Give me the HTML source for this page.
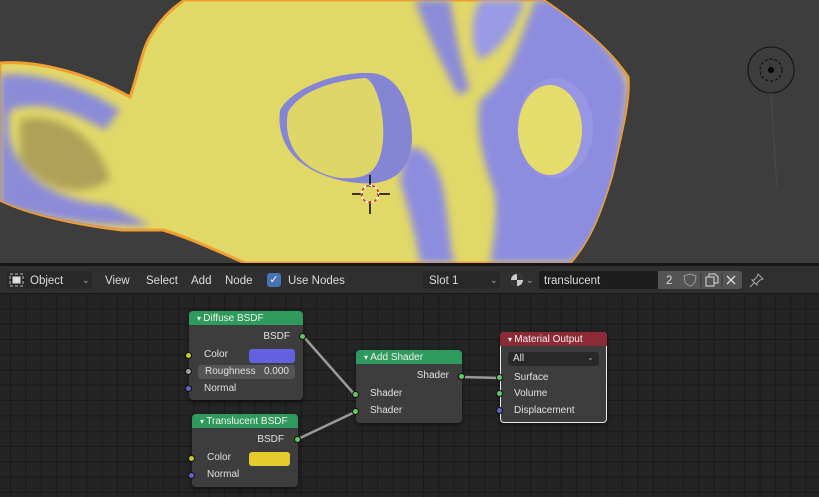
<!DOCTYPE html>
<html><head><meta charset="utf-8"><style>
*{margin:0;padding:0;box-sizing:border-box}
body{width:819px;height:497px;overflow:hidden;background:#232323;font-family:"Liberation Sans","DejaVu Sans",sans-serif;font-size:11px;color:#dcdcdc;position:relative}
.abs{position:absolute}
#vp{left:0;top:0;width:819px;height:263px;background:#3d3d3d;overflow:hidden}
#sep{left:0;top:263px;width:819px;height:3px;background:#161616}
#hdr{left:0;top:266px;width:819px;height:27px;background:#2f2f2f}
#ed{left:0;top:293px;width:819px;height:204px;background-color:#242424;
background-image:linear-gradient(#191919 1px,transparent 1px),linear-gradient(90deg,#191919 1px,transparent 1px);
background-size:15.3px 15.3px;background-position:10px 0px}
.t{position:absolute;white-space:nowrap;line-height:14px;font-size:11.5px}
.dd{position:absolute;background:#282828;border-radius:3px}
.node{position:absolute;background:#3d3d3d;border-radius:4px;box-shadow:0 2px 4px rgba(0,0,0,.5)}
.nh{position:absolute;left:0;top:0;right:0;height:14px;border-radius:4px 4px 0 0;font-size:10px;line-height:15px;padding-left:8px;color:#f0f0f0}
.nh:before{content:"▾ ";font-size:8px}
.nt{position:absolute;font-size:10px;line-height:14px;color:#e0e0e0;white-space:nowrap}
.s{position:absolute;width:7px;height:7px;border-radius:50%;border:1px solid #111}
.g{background:#63c763}.y{background:#c7c729}.p{background:#6363c7}.gr{background:#a1a1a1}
</style></head><body>
<div id="vp" class="abs">
<svg width="819" height="263" viewBox="0 0 819 263">
<defs><filter id="b"><feGaussianBlur stdDeviation="4"/></filter>
<clipPath id="c"><path d="M185,0 L543,0 C580,25 610,50 628,77 C630,100 622,130 612,175 C600,215 590,240 570,263 L245,263 C215,250 190,238 163,230 L122,230 C80,225 30,215 0,200 L0,63 C40,60 90,75 130,97 C138,75 142,50 150,37 C160,20 172,8 185,0 Z"/></clipPath></defs>
<path d="M185,0 L543,0 C580,25 610,50 628,77 C630,100 622,130 612,175 C600,215 590,240 570,263 L245,263 C215,250 190,238 163,230 L122,230 C80,225 30,215 0,200 L0,63 C40,60 90,75 130,97 C138,75 142,50 150,37 C160,20 172,8 185,0 Z" fill="#e2d868" stroke="#f0a030" stroke-width="3"/>
<g clip-path="url(#c)">
<g filter="url(#b)">
<path d="M0,75 C40,70 90,90 120,110 L105,130 C70,110 40,100 10,110 C0,160 40,200 110,205 L150,225 C90,228 30,215 0,205 Z" fill="#8b8bd8"/>
<path d="M20,120 C60,110 100,140 110,180 C80,200 40,190 20,160 Z" fill="#9a8a50" opacity=".7"/>
<path d="M415,0 L450,0 C455,30 460,60 470,90 L458,95 C440,60 425,30 415,0 Z" fill="#8b8bd8"/>
<path d="M535,0 L560,0 C590,30 625,60 628,90 L615,200 C600,240 585,255 570,263 L490,263 C495,230 500,200 490,180 C480,150 475,120 480,100 C495,90 510,70 520,40 Z" fill="#8d8de0"/>
<path d="M405,150 C420,140 440,160 445,200 C450,230 450,250 455,263 L420,263 C415,230 405,200 400,180 Z" fill="#8d8de0"/>
<path d="M480,0 L525,0 C515,30 500,50 480,60 C470,45 470,20 480,0 Z" fill="#9a9ae6"/>
</g>
<ellipse cx="555" cy="128" rx="38" ry="50" fill="#9696e2"/>
<ellipse cx="550" cy="130" rx="32" ry="45" fill="#e6dc6c"/>
<path d="M280,110 C295,85 340,72 368,73 C395,72 412,100 412,140 C410,175 388,188 350,182 C305,175 275,150 280,110 Z" fill="#8585d6"/>
<path d="M288,112 C302,88 340,80 365,78 C375,80 385,110 383,140 C380,170 370,180 340,178 C302,172 282,145 288,112 Z" fill="#e0d668"/>
</g>
<g stroke="#000" stroke-width="1.5"><line x1="370" y1="175" x2="370" y2="187"/><line x1="370" y1="201" x2="370" y2="214"/><line x1="352" y1="194" x2="363" y2="194"/><line x1="377" y1="194" x2="390" y2="194"/></g>
<circle cx="370" cy="194" r="8.5" fill="none" stroke="#fff" stroke-width="1.5"/>
<circle cx="370" cy="194" r="8.5" fill="none" stroke="#d03010" stroke-width="1.5" stroke-dasharray="3 3"/>
<circle cx="771" cy="70" r="23" fill="none" stroke="#111" stroke-width="1"/>
<circle cx="771" cy="70" r="11" fill="none" stroke="#111" stroke-width="1.2" stroke-dasharray="3 2"/>
<circle cx="771" cy="70" r="3" fill="#000"/>
<line x1="771" y1="93" x2="777" y2="190" stroke="#4a4a4a" stroke-width="1"/>
</svg>
</div>
<div id="sep" class="abs"></div>
<div id="hdr" class="abs">
<div class="dd" style="left:7px;top:5px;width:85px;height:18px"></div>
<svg class="abs" style="left:9px;top:7px" width="15" height="14"><rect x="1" y="1" width="13" height="12" fill="none" stroke="#bbb" stroke-dasharray="3 2"/><rect x="3.5" y="3.5" width="8" height="7" fill="#ddd"/></svg>
<div class="t" style="left:30px;top:8px">Object</div>
<div class="t" style="left:82px;top:7px;font-size:9px;color:#aaa">⌄</div>
<div class="t" style="left:105px;top:8px">View</div>
<div class="t" style="left:146px;top:8px">Select</div>
<div class="t" style="left:191px;top:8px">Add</div>
<div class="t" style="left:225px;top:8px">Node</div>
<div class="abs" style="left:267px;top:7px;width:14px;height:14px;background:#4772b3;border-radius:3px;color:#fff;font-size:11px;line-height:14px;text-align:center">✓</div>
<div class="t" style="left:288px;top:8px">Use Nodes</div>
<div class="dd" style="left:423px;top:5px;width:77px;height:18px"></div>
<div class="t" style="left:429px;top:8px">Slot 1</div>
<div class="t" style="left:490px;top:7px;font-size:9px;color:#aaa">⌄</div>
<svg class="abs" style="left:510px;top:7px" width="16" height="14"><circle cx="7" cy="7" r="6" fill="#ccc"/><path d="M7,7 L7,1 A6,6 0 0 1 13,7 Z M7,7 L1,7 A6,6 0 0 0 7,13 Z" fill="#333"/></svg>
<div class="t" style="left:526px;top:7px;font-size:9px;color:#aaa">⌄</div>
<div class="abs" style="left:539px;top:5px;width:119px;height:18px;background:#1d1d1d;border-radius:3px 0 0 3px"></div>
<div class="t" style="left:544px;top:8px">translucent</div>
<div class="abs" style="left:658px;top:5px;width:84px;height:18px;background:#545454;border-radius:0 3px 3px 0"></div>
<div class="t" style="left:666px;top:8px">2</div>
<svg class="abs" style="left:682px;top:7px" width="60" height="14"><path d="M8,1 L14,3 L13,9 Q10,13 8,13 Q5,12 3,9 L2,3 Z" fill="none" stroke="#999"/><line x1="19" y1="0" x2="19" y2="14" stroke="#333"/><rect x="24" y="4" width="8" height="9" fill="none" stroke="#ddd"/><path d="M27,4 L27,1 L33,1 L36,4 L36,10 L32,10" fill="none" stroke="#ddd"/><line x1="40" y1="0" x2="40" y2="14" stroke="#333"/><path d="M45,3 L53,11 M53,3 L45,11" stroke="#ddd" stroke-width="1.3"/></svg>
<svg class="abs" style="left:749px;top:6px" width="16" height="16"><path d="M9,2 L14,7 L11,8 L8,11 L8,13 L3,8 L5,8 L8,5 Z M5,11 L1,15" fill="none" stroke="#aaa"/></svg>
</div>
<div id="ed" class="abs"></div>
<svg class="abs" style="left:0;top:0" width="819" height="497">
<g stroke="#9a9a9a" stroke-width="2.5" fill="none">
<path d="M303,336 L355,395"/>
<path d="M298,439 L355,412"/>
<path d="M462,377 L500,378"/>
</g></svg>
<div class="node" style="left:189px;top:311px;width:114px;height:89px">
<div class="nh" style="background:#2e9a5c">Diffuse BSDF</div>
<div class="nt" style="right:13px;top:19px">BSDF</div>
<div class="nt" style="left:15px;top:37px">Color</div>
<div class="abs" style="left:60px;top:38px;width:46px;height:14px;background:#6262e0;border-radius:3px"></div>
<div class="abs" style="left:9px;top:54px;width:97px;height:14px;background:#545454;border-radius:3px"></div>
<div class="nt" style="left:16px;top:54px">Roughness</div>
<div class="nt" style="right:14px;top:54px">0.000</div>
<div class="nt" style="left:15px;top:71px">Normal</div>
<div class="s g" style="left:110px;top:22px"></div>
<div class="s y" style="left:-4px;top:41px"></div>
<div class="s gr" style="left:-4px;top:57px"></div>
<div class="s p" style="left:-4px;top:74px"></div>
</div>
<div class="node" style="left:192px;top:414px;width:106px;height:73px">
<div class="nh" style="background:#2e9a5c">Translucent BSDF</div>
<div class="nt" style="right:14px;top:19px">BSDF</div>
<div class="nt" style="left:15px;top:37px">Color</div>
<div class="abs" style="left:57px;top:38px;width:41px;height:14px;background:#e6cb2c;border-radius:3px"></div>
<div class="nt" style="left:15px;top:54px">Normal</div>
<div class="s g" style="left:102px;top:22px"></div>
<div class="s y" style="left:-4px;top:41px"></div>
<div class="s p" style="left:-4px;top:58px"></div>
</div>
<div class="node" style="left:356px;top:350px;width:106px;height:73px">
<div class="nh" style="background:#2e9a5c">Add Shader</div>
<div class="nt" style="right:13px;top:19px">Shader</div>
<div class="nt" style="left:14px;top:37px">Shader</div>
<div class="nt" style="left:14px;top:54px">Shader</div>
<div class="s g" style="left:102px;top:23px"></div>
<div class="s g" style="left:-4px;top:41px"></div>
<div class="s g" style="left:-4px;top:58px"></div>
</div>
<div class="node" style="left:500px;top:332px;width:107px;height:91px;border:1px solid #e8e8e8">
<div class="nh" style="background:#8c2a35;left:-1px;right:-1px;top:-1px">Material Output</div>
<div class="abs" style="left:7px;top:19px;width:91px;height:14px;background:#282828;border-radius:3px"></div>
<div class="nt" style="left:12px;top:19px">All</div>
<div class="nt" style="left:86px;top:18px;font-size:8px;color:#aaa">⌄</div>
<div class="nt" style="left:13px;top:38px">Surface</div>
<div class="nt" style="left:13px;top:54px">Volume</div>
<div class="nt" style="left:13px;top:71px">Displacement</div>
<div class="s g" style="left:-5px;top:41px"></div>
<div class="s g" style="left:-5px;top:57px"></div>
<div class="s p" style="left:-5px;top:74px"></div>
</div>
</body></html>
